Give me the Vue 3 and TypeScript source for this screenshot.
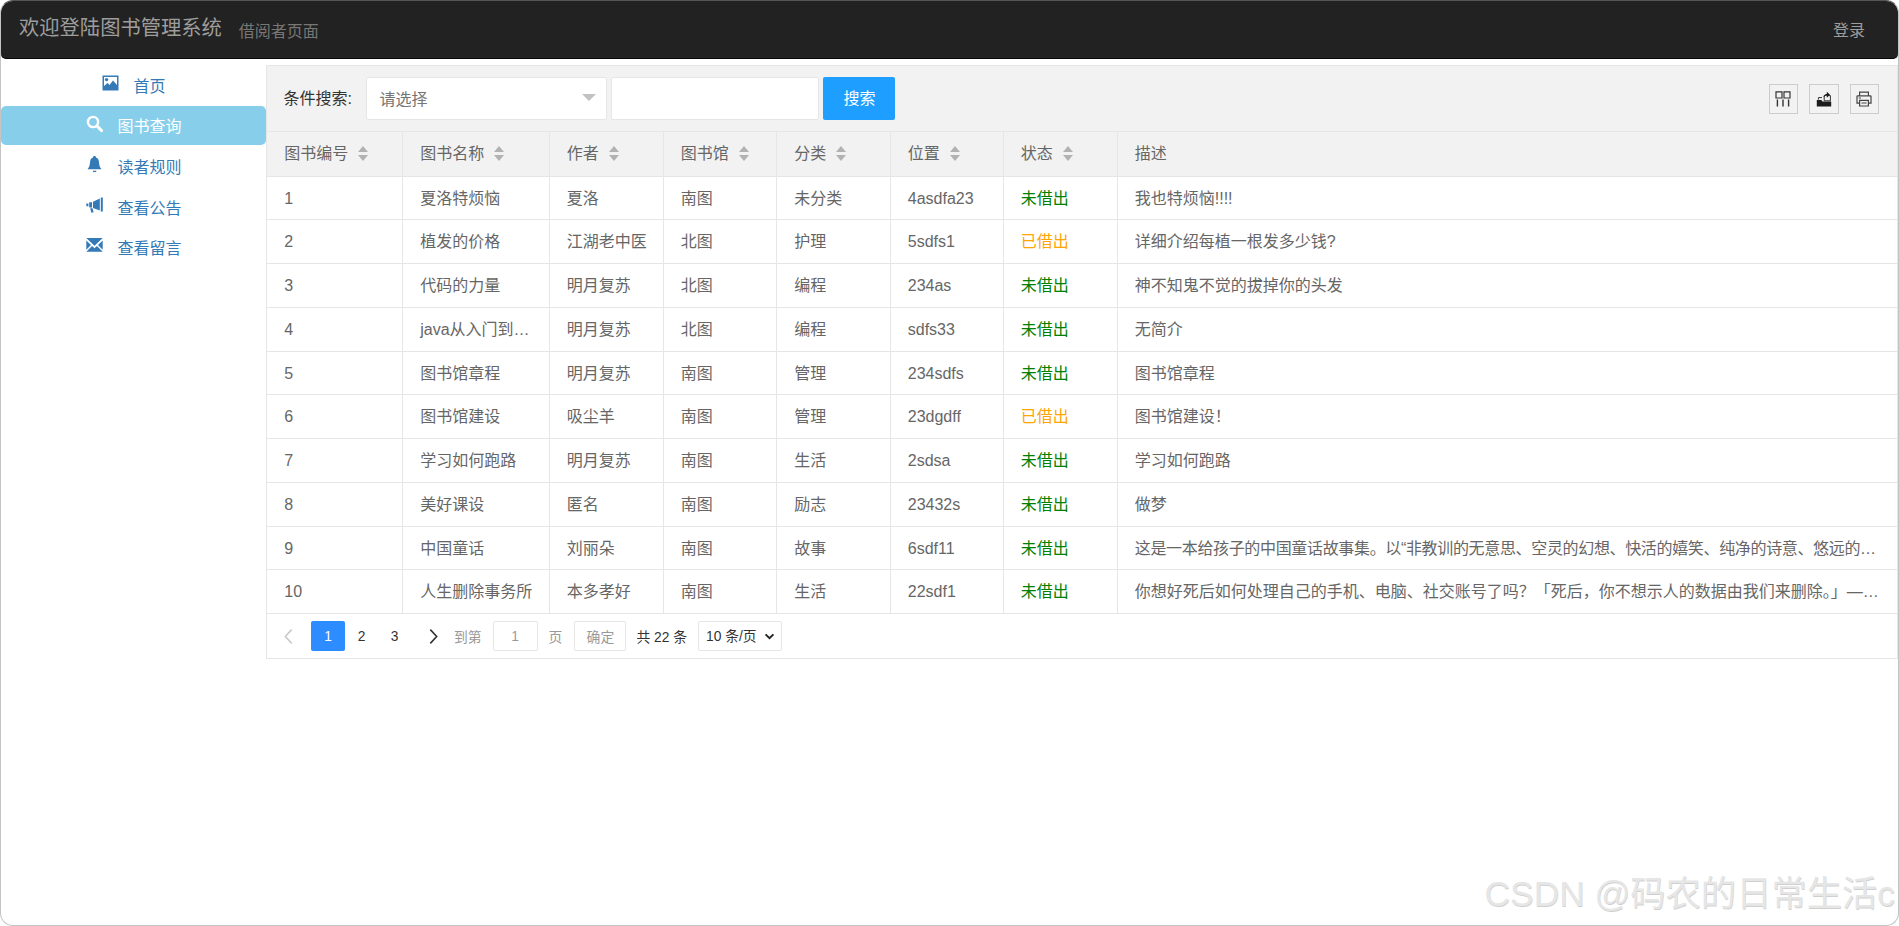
<script setup lang="ts">
interface Book { id: number; name: string; author: string; lib: string; cat: string; pos: string; lent: boolean; desc: string }
const columns = [
  { title: '图书编号', sort: true },
  { title: '图书名称', sort: true },
  { title: '作者', sort: true },
  { title: '图书馆', sort: true },
  { title: '分类', sort: true },
  { title: '位置', sort: true },
  { title: '状态', sort: true },
  { title: '描述', sort: false }
]
const books: Book[] = [
  { id: 1, name: '夏洛特烦恼', author: '夏洛', lib: '南图', cat: '未分类', pos: '4asdfa23', lent: false, desc: '我也特烦恼!!!!' },
  { id: 2, name: '植发的价格', author: '江湖老中医', lib: '北图', cat: '护理', pos: '5sdfs1', lent: true, desc: '详细介绍每植一根发多少钱?' },
  { id: 3, name: '代码的力量', author: '明月复苏', lib: '北图', cat: '编程', pos: '234as', lent: false, desc: '神不知鬼不觉的拔掉你的头发' },
  { id: 4, name: 'java从入门到放弃', author: '明月复苏', lib: '北图', cat: '编程', pos: 'sdfs33', lent: false, desc: '无简介' },
  { id: 5, name: '图书馆章程', author: '明月复苏', lib: '南图', cat: '管理', pos: '234sdfs', lent: false, desc: '图书馆章程' },
  { id: 6, name: '图书馆建设', author: '吸尘羊', lib: '南图', cat: '管理', pos: '23dgdff', lent: true, desc: '图书馆建设！' },
  { id: 7, name: '学习如何跑路', author: '明月复苏', lib: '南图', cat: '生活', pos: '2sdsa', lent: false, desc: '学习如何跑路' },
  { id: 8, name: '美好课设', author: '匿名', lib: '南图', cat: '励志', pos: '23432s', lent: false, desc: '做梦' },
  { id: 9, name: '中国童话', author: '刘丽朵', lib: '南图', cat: '故事', pos: '6sdf11', lent: false, desc: '这是一本给孩子的中国童话故事集。以“非教训的无意思、空灵的幻想、快活的嬉笑、纯净的诗意、悠远的民族记忆”为选编标准，收录了许多经典的民间故事。' },
  { id: 10, name: '人生删除事务所', author: '本多孝好', lib: '南图', cat: '生活', pos: '22sdf1', lent: false, desc: '你想好死后如何处理自己的手机、电脑、社交账号了吗？「死后，你不想示人的数据由我们来删除。」——这是一家专门替人删除数据的事务所。' }
]
const menu = [
  { label: '首页', icon: 'picture', active: false },
  { label: '图书查询', icon: 'search', active: true },
  { label: '读者规则', icon: 'bell', active: false },
  { label: '查看公告', icon: 'horn', active: false },
  { label: '查看留言', icon: 'mail', active: false }
]
const pages = [1, 2, 3]
</script>

<template>
  <div class="page">
    <header class="navbar">
      <span class="brand">欢迎登陆图书管理系统</span>
      <span class="subtitle">借阅者页面</span>
      <span class="login">登录</span>
    </header>

    <div class="main">
      <nav class="side">
        <a v-for="m in menu" :key="m.label" class="item" :class="{ active: m.active, first: m.icon === 'picture' }">
          <svg class="mi" viewBox="0 0 17 17" aria-hidden="true">
            <template v-if="m.icon === 'picture'">
              <path fill-rule="evenodd" d="M0.5 0.5H16.5V15.5H0.5ZM2 2V11L5.5 8L7.5 10L11 5.5L15 10V2Z" fill="currentColor" />
              <circle cx="4.6" cy="4.6" r="1.7" fill="currentColor" />
            </template>
            <template v-else-if="m.icon === 'search'">
              <circle cx="7" cy="7" r="5.1" fill="none" stroke="currentColor" stroke-width="2.4" />
              <path d="M10.8 10.8L15.6 15.6" stroke="currentColor" stroke-width="3" fill="none" stroke-linecap="round" />
            </template>
            <template v-else-if="m.icon === 'bell'">
              <path d="M8.5 0C9.5 0 10 0.7 10 1.5C12.2 2.2 12.8 4 13 6.4C13.2 9.2 13.8 11.2 15.5 13.2H1.5C3.2 11.2 3.8 9.2 4 6.4C4.2 4 4.8 2.2 7 1.5C7 0.7 7.5 0 8.5 0Z" fill="currentColor" />
              <path d="M7 14.8H10.2V16H7Z" fill="currentColor" />
            </template>
            <template v-else-if="m.icon === 'horn'">
              <path d="M14.8 0.5H16.8V14.5H14.8ZM13.8 1.6V13.4L7 11V4.8Z" fill="currentColor" />
              <path d="M6 5.2V10.6H3.2V5.2ZM0.3 6.5H2.4V9.2H0.3ZM4.2 11.3H6.6L7.6 15.5H5.2Z" fill="currentColor" />
            </template>
            <template v-else>
              <path d="M0.3 1H16.7L8.5 8.8ZM0.3 3.4L5 8L0.3 12.8ZM16.7 3.4V12.8L12 8ZM6 9L8.5 11.3L11 9L16.7 14.8H0.3Z" fill="currentColor" />
            </template>
          </svg>
          <span>{{ m.label }}</span>
        </a>
      </nav>

      <section class="content">
        <div class="grid">
          <div class="toolbar">
            <label class="flabel">条件搜索:</label>
            <div class="select">
              <span>请选择</span>
              <i class="caret"></i>
            </div>
            <input class="kw" type="text" />
            <button class="search" type="button">搜索</button>
            <div class="tools">
              <span class="tool">
                <svg viewBox="0 0 16 16" aria-hidden="true"><path d="M1 0.8H7V7H1ZM9 0.8H15V7H9Z" fill="none" stroke="#333" stroke-width="1.2" /><path d="M2.4 8.6V15.6M8 8.6V15.6M13.6 8.6V15.6" stroke="#333" stroke-width="1.4" fill="none" /></svg>
              </span>
              <span class="tool">
                <svg viewBox="0 0 16 16" aria-hidden="true"><path d="M0.8 15.4V9H5.4L6.4 10.4H15.2V15.4Z" fill="#1c1c1c" /><path d="M2.4 8.6V6.6H6M8.2 4.6V9.8H14.4V4.6H12.6" fill="none" stroke="#333" stroke-width="1" /><path d="M7.6 6.6C7.6 4.2 8.8 3 10.8 3V0.8L14 3.8L10.8 6.8V4.7C9.4 4.7 8.4 5.2 7.6 6.6Z" fill="#1c1c1c" /></svg>
              </span>
              <span class="tool">
                <svg viewBox="0 0 16 16" aria-hidden="true"><path d="M3.6 5V1.2H12.4V5M3.6 12.2H1V5.2Q1 4.8 1.6 4.8H14.4Q15 4.8 15 5.2V12.2H12.4M3.6 9.4H12.4V15H3.6Z" fill="none" stroke="#444" stroke-width="1.2" /><path d="M2.8 7H5" stroke="#444" stroke-width="1" /><path d="M5.4 12H10.6" stroke="#444" stroke-width="1" /></svg>
              </span>
            </div>
          </div>

          <div class="row head">
            <div v-for="c in columns" :key="c.title" class="cell">
              <span>{{ c.title }}</span>
              <span v-if="c.sort" class="sort"><i class="up"></i><i class="down"></i></span>
            </div>
          </div>

          <div v-for="b in books" :key="b.id" class="row">
            <div class="cell">{{ b.id }}</div>
            <div class="cell">{{ b.name }}</div>
            <div class="cell">{{ b.author }}</div>
            <div class="cell">{{ b.lib }}</div>
            <div class="cell">{{ b.cat }}</div>
            <div class="cell">{{ b.pos }}</div>
            <div class="cell" :class="b.lent ? 'lent' : 'free'">{{ b.lent ? '已借出' : '未借出' }}</div>
            <div class="cell desc" :class="{ tight: b.id === 9 }">{{ b.desc }}</div>
          </div>

          <div class="pager">
            <svg class="arrow" viewBox="0 0 10 16" aria-hidden="true"><path d="M8 1.5L2 8L8 14.5" fill="none" stroke="#c9c9c9" stroke-width="1.5" /></svg>
            <span v-for="p in pages" :key="p" class="num" :class="{ on: p === 1 }">{{ p }}</span>
            <svg class="arrow next" viewBox="0 0 10 16" aria-hidden="true"><path d="M2 1.5L8 8L2 14.5" fill="none" stroke="#333" stroke-width="1.5" /></svg>
            <span class="goto">到第</span>
            <span class="pinput">1</span>
            <span class="ye">页</span>
            <span class="ok">确定</span>
            <span class="count">共 22 条</span>
            <span class="limit-wrap">
              <select class="limit"><option>10 条/页</option></select>
              <svg class="chev" viewBox="0 0 12 8" aria-hidden="true"><path d="M1.5 1.5L6 6L10.5 1.5" fill="none" stroke="#222" stroke-width="2.2" /></svg>
            </span>
          </div>
        </div>
      </section>
    </div>
    <div class="mark">CSDN @码农的日常生活c</div>
  </div>
</template>

<style>
html, body { margin: 0; background: #fff; overflow: hidden; }
</style>

<style scoped>
.page {
  position: relative;
  box-sizing: border-box;
  width: 1899px;
  height: 926px;
  border: 1px solid #c4c4c4;
  border-top-color: #555;
  border-radius: 13px;
  overflow: hidden;
  background: #fff;
  font-family: "Liberation Sans", "Noto Sans CJK SC", sans-serif;
  font-size: 16px;
  color: #666;
}
.navbar {
  box-sizing: border-box;
  height: 58px;
  display: flex;
  align-items: center;
  padding: 0 33px 0 18px;
  background: #222;
  border-bottom: 1px solid #080808;
  border-radius: 0 0 5px 5px;
  color: #9d9d9d;
}
.brand { font-size: 20.3px; line-height: 1; margin-top: -2px; }
.subtitle { font-size: 16px; margin-left: 17px; margin-top: 1px; color: #777; }
.login { margin-left: auto; font-size: 16px; margin-top: -1px; }
.main { display: flex; align-items: flex-start; padding-top: 6px; }
.side {
  width: 265px;
  flex: none;
  display: flex;
  flex-direction: column;
  gap: 2px;
  padding-top: 0.5px;
}
.item {
  height: 38.6px;
  display: flex;
  align-items: center;
  padding-left: 85px;
  gap: 14.5px;
  color: #337ab7;
  border-radius: 5px;
  white-space: nowrap;
}
.item.first { padding-left: 101px; }
.item.active { background: #87ceeb; color: #fff; }
.mi { width: 17px; height: 17px; flex: none; margin-top: -3px; }
.content { flex: 1; min-width: 0; }
.grid {
  box-sizing: border-box;
  height: 594px;
  border: 1px solid #e6e6e6;
}
.toolbar {
  box-sizing: border-box;
  height: 66px;
  display: flex;
  align-items: center;
  padding: 0 18px 0 16.5px;
  background: #f2f2f2;
  border-bottom: 1px solid #e6e6e6;
}
.flabel { color: #333; margin: 0 14.5px 3px 0; white-space: nowrap; }
.select {
  box-sizing: border-box;
  width: 241px;
  height: 43px;
  display: flex;
  align-items: center;
  justify-content: space-between;
  padding: 0 10px 2px 12px;
  background: #fff;
  border: 1px solid #e6e6e6;
  border-radius: 2px;
  color: #757575;
  margin-right: 4px;
}
.caret {
  width: 0;
  height: 0;
  border: 7px solid transparent;
  border-top: 7px solid #c2c2c2;
  border-bottom-width: 0;
}
.kw {
  box-sizing: border-box;
  width: 208px;
  height: 43px;
  border: 1px solid #e6e6e6;
  border-radius: 2px;
  background: #fff;
  margin: 0 4px 0 0;
  padding: 0;
}
.search {
  box-sizing: border-box;
  width: 72px;
  height: 43px;
  border: 0;
  border-radius: 2px;
  background: #1e9fff;
  color: #fff;
  font: inherit;
  padding: 0 0 3px;
}
.tools { margin-left: auto; display: flex; gap: 11px; }
.tool {
  box-sizing: border-box;
  width: 29.5px;
  height: 30px;
  display: flex;
  align-items: center;
  justify-content: center;
  border: 1px solid #ccc;
}
.tool svg { width: 16px; height: 16px; }
.row {
  box-sizing: border-box;
  height: 43.75px;
  display: grid;
  grid-template-columns: 136px 146.5px 114px 113.5px 113.5px 113px 114px minmax(0, 1fr);
  border-bottom: 1px solid #e6e6e6;
}
.head { height: 44.5px; background: #f2f2f2; }
.head .cell { line-height: 44px; }
.cell {
  box-sizing: border-box;
  min-width: 0;
  display: block;
  padding: 0 14px 0 17.25px;
  line-height: 43px;
  border-right: 1px solid #e6e6e6;
  white-space: nowrap;
  overflow: hidden;
  text-overflow: ellipsis;
}
.cell:last-child { border-right: 0; }
.desc { padding-right: 17px; }
.tight { letter-spacing: -0.34px; }
.sort {
  display: inline-block;
  vertical-align: middle;
  width: 11px;
  height: 14px;
  margin-left: 10px;
  margin-top: -2px;
  position: relative;
}
.up, .down {
  position: absolute;
  left: 0;
  width: 0;
  height: 0;
  border: 5.5px solid transparent;
}
.up { top: -0.5px; border-top-width: 0; border-bottom: 6px solid #b2b2b2; }
.down { bottom: -0.5px; border-bottom-width: 0; border-top: 6px solid #b2b2b2; }
.free { color: #008000; }
.lent { color: #ffa500; }
.pager {
  box-sizing: border-box;
  height: 44px;
  display: flex;
  align-items: center;
  padding-left: 16px;
  font-size: 13.8px;
  color: #333;
}
.arrow { width: 11px; height: 17px; flex: none; margin-right: 17px; }
.next { margin-left: 17px; margin-right: 15px; }
.num {
  width: 34px;
  height: 30px;
  display: flex;
  align-items: center;
  justify-content: center;
  border-radius: 2px;
}
.num + .num { width: 33px; }
.num.on { background: #2d8cff; color: #fff; }
.goto { color: #999; margin-right: 11px; }
.pinput, .ok {
  box-sizing: border-box;
  height: 30px;
  display: flex;
  align-items: center;
  justify-content: center;
  border: 1px solid #e6e6e6;
  border-radius: 2px;
  color: #999;
}
.pinput { width: 45px; }
.ye { color: #999; margin: 0 11px 0 11px; }
.ok { width: 52px; margin-left: 1px; }
.count { margin: 0 11px 0 10px; white-space: nowrap; }
.limit-wrap { position: relative; display: block; width: 84px; height: 30px; }
.limit {
  box-sizing: border-box;
  display: block;
  width: 84px;
  height: 30px;
  border: 1px solid #e6e6e6;
  border-radius: 2px;
  background: #fff;
  color: #333;
  font: inherit;
  padding: 0 0 0 7px;
  appearance: none;
  -webkit-appearance: none;
}
.chev { position: absolute; right: 7px; top: 12px; width: 11px; height: 7px; pointer-events: none; }
.mark {
  position: absolute;
  right: 3px;
  bottom: 10px;
  font-size: 35.3px;
  line-height: 1.2;
  color: #e6e6e6;
  text-shadow: 0.5px 0.5px 0.5px #cfcfcf;
  white-space: nowrap;
  font-weight: 400;
}
</style>
